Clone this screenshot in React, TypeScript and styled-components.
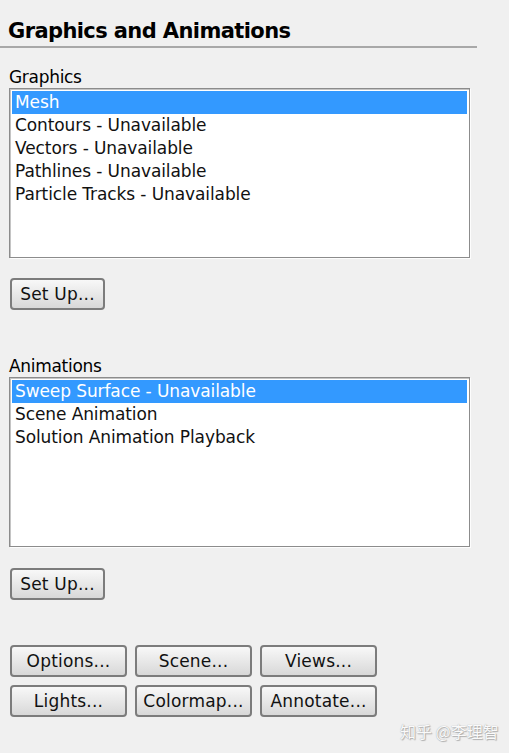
import styled, { createGlobalStyle } from "styled-components";

const GlobalStyle = createGlobalStyle`
	html, body {
		margin: 0;
		padding: 0;
		background: #f0f0f0;
	}
	body {
		font-family: "DejaVu Sans", Verdana, sans-serif;
		color: #111;
	}
`;

const Panel = styled.div`
	position: relative;
	width: 509px;
	height: 753px;
	background: #f0f0f0;
	overflow: hidden;
`;

const Header = styled.div`
	width: 477px;
	padding-top: 16px;
	border-bottom: 2px solid #a8a8a8;
`;

const Title = styled.h1`
	margin: 0 0 0 8px;
	font-size: 21px;
	line-height: 30px;
	font-weight: 700;
	color: #000;
	letter-spacing: -0.6px;
`;

const Body = styled.div`
	padding: 0 0 0 9px;
`;

const Label = styled.div<{ $top: number }>`
	margin-top: ${(p) => p.$top}px;
	font-size: 17px;
	line-height: 22px;
	letter-spacing: -0.3px;
	color: #000;
`;

const ListBox = styled.ul`
	margin: 0;
	width: 455px;
	height: 164px;
	padding: 2px 2px;
	list-style: none;
	background: #fff;
	border: 1px solid #8c8c8c;
	box-shadow: inset 1px 1px 0 #c4c4c4, 1px 1px 0 #fdfdfd;
`;

const Item = styled.li<{ $selected?: boolean }>`
	height: 23px;
	line-height: 23px;
	padding-left: 3px;
	font-size: 17px;
	letter-spacing: -0.1px;
	white-space: nowrap;
	color: ${(p) => (p.$selected ? "#fff" : "#111")};
	background: ${(p) => (p.$selected ? "#3399ff" : "transparent")};
`;

const Button = styled.button<{ $width: number }>`
	box-sizing: border-box;
	width: ${(p) => p.$width}px;
	height: 32px;
	padding: 0;
	border: 2px solid #7c7c7c;
	border-radius: 4px;
	background: linear-gradient(#f8f8f8, #e8e8e8 50%, #d8d8d8);
	font-family: "DejaVu Sans", Verdana, sans-serif;
	font-size: 17px;
	letter-spacing: 0.2px;
	color: #111;
`;

const ButtonRow = styled.div<{ $top: number }>`
	margin-top: ${(p) => p.$top}px;
	padding-left: 1px;
	height: 32px;
`;

const ButtonGrid = styled.div`
	margin-top: 45px;
	padding-left: 1px;
	display: grid;
	grid-template-columns: repeat(3, 117px);
	grid-auto-rows: 32px;
	column-gap: 8px;
	row-gap: 8px;
`;

const Watermark = styled.div`
	position: absolute;
	left: 400px;
	top: 719px;
	font-family: "Noto Sans CJK SC", sans-serif;
	font-size: 16px;
	color: #fafafa;
	text-shadow: 0 0 1px #9a9a9a, 1px 1px 1px #b0b0b0;
`;

const graphics = [
	"Mesh",
	"Contours - Unavailable",
	"Vectors - Unavailable",
	"Pathlines - Unavailable",
	"Particle Tracks - Unavailable",
];

const animations = [
	"Sweep Surface - Unavailable",
	"Scene Animation",
	"Solution Animation Playback",
];

const tools = ["Options...", "Scene...", "Views...", "Lights...", "Colormap...", "Annotate..."];

export default function App() {
	return (
		<Panel>
			<GlobalStyle />
			<Header>
				<Title>Graphics and Animations</Title>
			</Header>
			<Body>
				<Label $top={18}>Graphics</Label>
				<ListBox>
					{graphics.map((g, i) => (
						<Item key={g} $selected={i === 0}>
							{g}
						</Item>
					))}
				</ListBox>
				<ButtonRow $top={20}>
					<Button $width={95}>Set Up...</Button>
				</ButtonRow>
				<Label $top={45}>Animations</Label>
				<ListBox>
					{animations.map((a, i) => (
						<Item key={a} $selected={i === 0}>
							{a}
						</Item>
					))}
				</ListBox>
				<ButtonRow $top={21}>
					<Button $width={95}>Set Up...</Button>
				</ButtonRow>
				<ButtonGrid>
					{tools.map((t) => (
						<Button key={t} $width={117}>
							{t}
						</Button>
					))}
				</ButtonGrid>
			</Body>
			<Watermark>知乎 @李理智</Watermark>
		</Panel>
	);
}
